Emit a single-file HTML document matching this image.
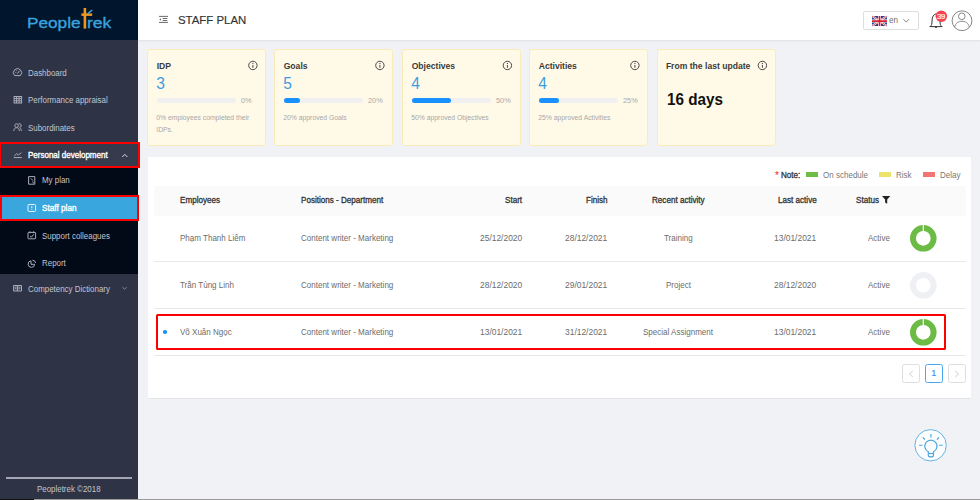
<!DOCTYPE html><html><head><meta charset="utf-8"><style>
*{margin:0;padding:0;box-sizing:border-box}
html,body{width:980px;height:500px;overflow:hidden}
body{position:relative;background:#f0f2f5;font-family:"Liberation Sans",sans-serif;color:#333}
.a{position:absolute;white-space:nowrap}
svg.a{overflow:visible}
.card{background:#fffae8;border:1px solid #fcebb8;border-radius:3px;width:119px;height:96.2px;top:49.4px}
.bar{height:5px;border-radius:3px;background:#f0f0f0;top:98px}
.barf{height:5px;border-radius:3px;background:#1890ff;top:98px}
.sep{height:1px;background:#e8e8e8;left:154px;width:811.6px}
.ic{stroke:#a9adb9;fill:none;stroke-width:1}
</style></head><body>
<div class="a" style="left:0;top:0;width:138px;height:40px;background:#01152c"></div>
<div class="a" style="left:0;top:40px;width:138px;height:460px;background:#2e3346"></div>
<div class="a" style="left:138px;top:0;width:842px;height:40px;background:#fff;box-shadow:0 1px 2px rgba(0,0,0,0.08)"></div>
<div class="a" style="left:26.77px;top:15.00px;font-size:15.5px;line-height:15.5px;color:#3aa2de;transform:scaleX(1.11);transform-origin:0 0;-webkit-text-stroke:0.35px #3aa2de;">People</div>
<div class="a" style="left:86.75px;top:15.00px;font-size:15.5px;line-height:15.5px;color:#3aa2de;transform:scaleX(1.13);transform-origin:0 0;-webkit-text-stroke:0.35px #3aa2de;">rek</div>
<svg class="a" style="left:0;top:0" width="138" height="40"><rect x="83.6" y="8" width="2.6" height="20.6" fill="#f0961e"/><rect x="81.4" y="13.4" width="10.8" height="2.5" fill="#f0961e"/><line x1="87.5" y1="13.9" x2="92.2" y2="10" stroke="#3aa2de" stroke-width="1.5"/></svg>
<svg class="a" style="left:0;top:0" width="200" height="40"><g stroke="#5a5a5a" stroke-width="0.9"><line x1="159" y1="16.4" x2="168" y2="16.4"/><line x1="162.7" y1="18.5" x2="167.3" y2="18.5"/><line x1="162.7" y1="20.5" x2="167.3" y2="20.5"/><line x1="159" y1="22.4" x2="168" y2="22.4"/></g><path d="M161 18.4 L159.3 19.5 L161 20.6Z" fill="#5a5a5a"/></svg>
<div class="a" style="left:178.01px;top:14.00px;font-size:11.6px;line-height:11.6px;color:#333;transform:scaleX(0.985);transform-origin:0 0;-webkit-text-stroke:0.15px #333;">STAFF PLAN</div>
<div class="a" style="left:862.9px;top:11.2px;width:56.2px;height:18.4px;border:1px solid #dedede;border-radius:2px"></div>
<svg class="a" style="left:871.9px;top:15.8px" width="15" height="10" viewBox="0 0 60 40"><rect width="60" height="40" fill="#2a3f8f"/><path d="M0 0L60 40M60 0L0 40" stroke="#fff" stroke-width="8"/><path d="M0 0L60 40M60 0L0 40" stroke="#d4202e" stroke-width="3"/><path d="M30 0V40M0 20H60" stroke="#fff" stroke-width="12"/><path d="M30 0V40M0 20H60" stroke="#d4202e" stroke-width="7"/></svg>
<div class="a" style="left:889.01px;top:16.00px;font-size:8.4px;line-height:8.4px;color:#707070;transform:scaleX(0.97);transform-origin:0 0;">en</div>
<svg class="a" style="left:0;top:0" width="980" height="40"><path d="M903.3 19.2 L906.2 22 L909 19.2" stroke="#777" stroke-width="0.9" fill="none"/></svg>
<svg class="a" style="left:0;top:0" width="980" height="40"><path d="M929.6 26.6 H942.4 M930.3 26.6 C931.6 25.3 932 24 932 21 C932 17 933.6 14.3 936 13.9 C938.4 14.3 940 17 940 21 C940 24 940.4 25.3 941.7 26.6" stroke="#333" stroke-width="1" fill="none"/><path d="M934.6 27.1 Q936 29 937.4 27.1" fill="#333"/>
<circle cx="941.35" cy="16.25" r="5.75" fill="#f5424f"/>
<circle cx="962" cy="20.75" r="9.9" stroke="#7a7a7a" stroke-width="0.9" fill="none"/>
<circle cx="961.8" cy="16.3" r="3.3" stroke="#7a7a7a" stroke-width="0.9" fill="none"/>
<path d="M954.6 27.2 C955.5 23 958.5 21.3 962 21.3 C965.5 21.3 968.5 23 969.4 27.2" stroke="#7a7a7a" stroke-width="0.9" fill="none"/>
</svg>
<div class="a" style="left:936.96px;top:13.00px;font-size:7.8px;line-height:7.8px;color:#fff;-webkit-text-stroke:0.15px #fff;letter-spacing:-0.25px;">39</div>
<div class="a" style="left:-1px;top:141.6px;width:141px;height:26.4px;background:#353a4d;border:2px solid #fc0000"></div>
<div class="a" style="left:0;top:168px;width:138px;height:106.3px;background:#020a17"></div>
<div class="a" style="left:0;top:195.4px;width:139px;height:25.2px;background:#3aa6de;border:2px solid #fc0000"></div>
<div class="a" style="left:28.12px;top:69.00px;font-size:8.3px;line-height:8.3px;color:#c3c6cf;transform:scaleX(0.955);transform-origin:0 0;">Dashboard</div>
<div class="a" style="left:28.12px;top:96.00px;font-size:8.3px;line-height:8.3px;color:#c3c6cf;transform:scaleX(0.955);transform-origin:0 0;">Performance appraisal</div>
<div class="a" style="left:28.12px;top:124.00px;font-size:8.3px;line-height:8.3px;color:#c3c6cf;transform:scaleX(0.955);transform-origin:0 0;">Subordinates</div>
<div class="a" style="left:28.12px;top:151.00px;font-size:8.3px;line-height:8.3px;color:#fff;-webkit-text-stroke:0.35px #fff;transform:scaleX(0.965);transform-origin:0 0;">Personal development</div>
<div class="a" style="left:41.72px;top:176.00px;font-size:8.3px;line-height:8.3px;color:#c3c6cf;transform:scaleX(0.955);transform-origin:0 0;">My plan</div>
<div class="a" style="left:41.81px;top:204.00px;font-size:8.3px;line-height:8.3px;color:#fff;-webkit-text-stroke:0.35px #fff;transform:scaleX(0.99);transform-origin:0 0;">Staff plan</div>
<div class="a" style="left:41.82px;top:232.00px;font-size:8.3px;line-height:8.3px;color:#c3c6cf;transform:scaleX(0.955);transform-origin:0 0;">Support colleagues</div>
<div class="a" style="left:41.82px;top:259.00px;font-size:8.3px;line-height:8.3px;color:#c3c6cf;transform:scaleX(0.955);transform-origin:0 0;">Report</div>
<div class="a" style="left:28.22px;top:285.00px;font-size:8.3px;line-height:8.3px;color:#c3c6cf;transform:scaleX(0.955);transform-origin:0 0;">Competency Dictionary</div>
<svg class="a" style="left:0;top:0" width="138" height="300">
<g class="ic">
<path d="M14.6 75.6 A4.1 4.1 0 1 1 20.4 75.6 Z"/><path d="M17.5 73.6 L19.4 70.9 M15.4 72.4 H16.3 M16.4 70.2 L16.9 70.8"/>
<rect x="14.1" y="96.5" width="7.5" height="6.5"/><path d="M14.1 98.6H21.6M14.1 100.8H21.6M16.6 96.5V103M19.1 96.5V103"/>
<circle cx="16.6" cy="125.6" r="1.8"/><path d="M13.8 131 C14 128.6 15.2 127.7 16.6 127.7 C18 127.7 19.2 128.6 19.4 131"/><path d="M18.6 123.9 A1.8 1.8 0 1 1 19.6 127.3 M19.6 127.7 C20.6 128.1 21.2 129 21.3 131"/>
<path d="M13.8 157.6 H21.8 M14.3 156 L16.8 153.6 L18.3 155 L21.3 152.8"/>
<path d="M34.8 176.6 H28.6 V184.2 H34.8 Z"/><path d="M30.8 178.4 L33 180.6 M32.2 181.6 L34 183.2"/>
<rect x="28" y="204.5" width="7.6" height="7" rx="1" stroke="#e8f4fb"/><path d="M31.8 206.2 V208.3 M31.8 209.3 V210" stroke="#e8f4fb"/>
<rect x="28" y="232.4" width="7.6" height="6.4" rx="0.6"/><path d="M30 231.3V233.2M33.6 231.3V233.2M30 235.9 L31.4 237.2 L33.8 234.3"/>
<path d="M31 260.8 A3.3 3.3 0 1 0 34.7 264.3 H31 Z"/><path d="M32.4 260.2 A3.2 3.2 0 0 1 35.6 263"/>
<path d="M13.6 285.5 H17.4 V291 H13.6 Z M17.4 285.5 H21.5 V291 H17.4 Z M14.6 287.2H16.4M14.6 288.8H16.4M18.4 287.2H20.4M18.4 288.8H20.4"/>
</g>
<path d="M122.2 157 L124.8 154.4 L127.4 157" stroke="#d9dbe2" stroke-width="1" fill="none"/>
<path d="M122.5 287.2 L124.6 289.2 L126.7 287.2" stroke="#8d91a0" stroke-width="0.9" fill="none"/>
</svg>
<div class="a" style="left:6px;top:477.3px;width:126px;height:1.5px;background:#a3a6b2"></div>
<div class="a" style="left:36.92px;top:485.00px;font-size:8.3px;line-height:8.3px;color:#c3c6cf;transform:scaleX(0.955);transform-origin:0 0;">Peopletrek ©2018</div>
<div class="a" style="left:0;top:499px;width:34px;height:1px;background:#111"></div>
<div class="a" style="left:34px;top:499px;width:946px;height:1px;background:#9b9b9b"></div>
<div class="a card" style="left:147px"></div>
<div class="a card" style="left:274px"></div>
<div class="a card" style="left:402px"></div>
<div class="a card" style="left:529px"></div>
<div class="a card" style="left:657px"></div>
<div class="a" style="left:156.68px;top:62.00px;font-size:8.6px;line-height:8.6px;color:#3a3a3a;font-weight:bold;">IDP</div>
<div class="a" style="left:156.36px;top:76.00px;font-size:15.6px;line-height:15.6px;color:#3d9ce0;">3</div>
<div class="a bar" style="left:156.7px;width:79.6px"></div>
<div class="a" style="left:241.06px;top:97.00px;font-size:7.8px;line-height:7.8px;color:#a8a8a8;transform:scaleX(0.94);transform-origin:0 0;">0%</div>
<div class="a" style="left:156.29px;top:115.00px;font-size:6.8px;line-height:6.8px;color:#a8a8a8;">0% employees completed their</div>
<div class="a" style="left:156.29px;top:127.00px;font-size:6.8px;line-height:6.8px;color:#a8a8a8;">IDPs.</div>
<div class="a" style="left:283.68px;top:62.00px;font-size:8.6px;line-height:8.6px;color:#3a3a3a;font-weight:bold;">Goals</div>
<div class="a" style="left:283.36px;top:76.00px;font-size:15.6px;line-height:15.6px;color:#3d9ce0;">5</div>
<div class="a bar" style="left:283.7px;width:79.6px"></div>
<div class="a barf" style="left:283.7px;width:15.9px"></div>
<div class="a" style="left:368.06px;top:97.00px;font-size:7.8px;line-height:7.8px;color:#a8a8a8;transform:scaleX(0.94);transform-origin:0 0;">20%</div>
<div class="a" style="left:283.29px;top:115.00px;font-size:6.8px;line-height:6.8px;color:#a8a8a8;">20% approved Goals</div>
<div class="a" style="left:411.68px;top:62.00px;font-size:8.6px;line-height:8.6px;color:#3a3a3a;font-weight:bold;">Objectives</div>
<div class="a" style="left:411.36px;top:76.00px;font-size:15.6px;line-height:15.6px;color:#3d9ce0;">4</div>
<div class="a bar" style="left:411.7px;width:79.6px"></div>
<div class="a barf" style="left:411.7px;width:39.8px"></div>
<div class="a" style="left:496.06px;top:97.00px;font-size:7.8px;line-height:7.8px;color:#a8a8a8;transform:scaleX(0.94);transform-origin:0 0;">50%</div>
<div class="a" style="left:411.29px;top:115.00px;font-size:6.8px;line-height:6.8px;color:#a8a8a8;">50% approved Objectives</div>
<div class="a" style="left:538.68px;top:62.00px;font-size:8.6px;line-height:8.6px;color:#3a3a3a;font-weight:bold;">Activities</div>
<div class="a" style="left:538.36px;top:76.00px;font-size:15.6px;line-height:15.6px;color:#3d9ce0;">4</div>
<div class="a bar" style="left:538.7px;width:79.6px"></div>
<div class="a barf" style="left:538.7px;width:19.9px"></div>
<div class="a" style="left:623.06px;top:97.00px;font-size:7.8px;line-height:7.8px;color:#a8a8a8;transform:scaleX(0.94);transform-origin:0 0;">25%</div>
<div class="a" style="left:538.29px;top:115.00px;font-size:6.8px;line-height:6.8px;color:#a8a8a8;">25% approved Activities</div>
<svg class="a" style="left:0;top:0" width="980" height="150"><circle cx="252.9" cy="65.45" r="4.2" stroke="#484848" stroke-width="1" fill="none"/><path d="M252.9 64.9V67.8" stroke="#484848" stroke-width="1"/><circle cx="252.9" cy="63.4" r="0.6" fill="#484848"/><circle cx="379.9" cy="65.45" r="4.2" stroke="#484848" stroke-width="1" fill="none"/><path d="M379.9 64.9V67.8" stroke="#484848" stroke-width="1"/><circle cx="379.9" cy="63.4" r="0.6" fill="#484848"/><circle cx="507.4" cy="65.45" r="4.2" stroke="#484848" stroke-width="1" fill="none"/><path d="M507.4 64.9V67.8" stroke="#484848" stroke-width="1"/><circle cx="507.4" cy="63.4" r="0.6" fill="#484848"/><circle cx="634.9" cy="65.45" r="4.2" stroke="#484848" stroke-width="1" fill="none"/><path d="M634.9 64.9V67.8" stroke="#484848" stroke-width="1"/><circle cx="634.9" cy="63.4" r="0.6" fill="#484848"/><circle cx="762.4" cy="65.45" r="4.2" stroke="#484848" stroke-width="1" fill="none"/><path d="M762.4 64.9V67.8" stroke="#484848" stroke-width="1"/><circle cx="762.4" cy="63.4" r="0.6" fill="#484848"/></svg>
<div class="a" style="left:665.88px;top:62.00px;font-size:8.6px;line-height:8.6px;color:#3a3a3a;font-weight:bold;">From the last update</div>
<div class="a" style="left:666.68px;top:91.00px;font-size:16.4px;line-height:16.4px;color:#111;font-weight:bold;transform:scaleX(0.93);transform-origin:0 0;">16 days</div>
<div class="a" style="left:147.5px;top:156.6px;width:823.5px;height:241.2px;background:#fff;box-shadow:0 0.5px 1px rgba(0,0,0,0.06)"></div>
<div class="a" style="left:154px;top:186px;width:811.6px;height:29.5px;background:#fafafa"></div>
<div class="a" style="left:774.90px;top:171.00px;font-size:10px;line-height:10px;color:#f5222d;">*</div>
<div class="a" style="left:780.51px;top:171.00px;font-size:8.3px;line-height:8.3px;color:#333;-webkit-text-stroke:0.3px #333;transform:scaleX(0.975);transform-origin:0 0;">Note:</div>
<div class="a" style="left:806px;top:172.3px;width:11.7px;height:5px;background:#6dbc45"></div>
<div class="a" style="left:823.32px;top:172.00px;font-size:8.2px;line-height:8.2px;color:#777;transform:scaleX(0.98);transform-origin:0 0;">On schedule</div>
<div class="a" style="left:879.4px;top:172.3px;width:11.5px;height:5px;background:#eee36a"></div>
<div class="a" style="left:896.22px;top:172.00px;font-size:8.2px;line-height:8.2px;color:#777;transform:scaleX(0.98);transform-origin:0 0;">Risk</div>
<div class="a" style="left:923.2px;top:172.3px;width:11.7px;height:5px;background:#f47474"></div>
<div class="a" style="left:940.22px;top:172.00px;font-size:8.2px;line-height:8.2px;color:#777;transform:scaleX(0.98);transform-origin:0 0;">Delay</div>
<div class="a" style="left:179.51px;top:196.00px;font-size:8.3px;line-height:8.3px;color:#333;-webkit-text-stroke:0.3px #333;transform:scaleX(0.975);transform-origin:0 0;">Employees</div>
<div class="a" style="left:301.31px;top:196.00px;font-size:8.3px;line-height:8.3px;color:#333;-webkit-text-stroke:0.3px #333;transform:scaleX(0.975);transform-origin:0 0;">Positions - Department</div>
<div class="a" style="left:504.80px;top:196.00px;font-size:8.3px;line-height:8.3px;color:#333;-webkit-text-stroke:0.3px #333;transform:scaleX(0.975);transform-origin:0 0;">Start</div>
<div class="a" style="left:586.00px;top:196.00px;font-size:8.3px;line-height:8.3px;color:#333;-webkit-text-stroke:0.3px #333;transform:scaleX(0.975);transform-origin:0 0;">Finish</div>
<div class="a" style="left:652.39px;top:196.00px;font-size:8.3px;line-height:8.3px;color:#333;-webkit-text-stroke:0.3px #333;transform:scaleX(0.975);transform-origin:0 0;">Recent activity</div>
<div class="a" style="left:777.51px;top:196.00px;font-size:8.3px;line-height:8.3px;color:#333;-webkit-text-stroke:0.3px #333;transform:scaleX(0.975);transform-origin:0 0;">Last active</div>
<div class="a" style="left:856.31px;top:196.00px;font-size:8.3px;line-height:8.3px;color:#333;-webkit-text-stroke:0.3px #333;transform:scaleX(0.975);transform-origin:0 0;">Status</div>
<svg class="a" style="left:0;top:0" width="980" height="220"><path d="M882 196 H890.3 L887.2 199.6 V203.8 L885.1 202.6 V199.6 Z" fill="#222"/></svg>
<div class="a sep" style="top:261px"></div>
<div class="a sep" style="top:307.7px"></div>
<div class="a sep" style="top:354.6px"></div>
<div class="a" style="left:179.62px;top:235.00px;font-size:8.2px;line-height:8.2px;color:#6c6c6c;transform:scaleX(0.98);transform-origin:0 0;">Phạm Thanh Liêm</div>
<div class="a" style="left:301.32px;top:235.00px;font-size:8.2px;line-height:8.2px;color:#6c6c6c;transform:scaleX(0.98);transform-origin:0 0;">Content writer - Marketing</div>
<div class="a" style="left:479.63px;top:235.00px;font-size:8.2px;line-height:8.2px;color:#6c6c6c;transform:scaleX(1.03);transform-origin:0 0;">25/12/2020</div>
<div class="a" style="left:564.93px;top:235.00px;font-size:8.2px;line-height:8.2px;color:#6c6c6c;transform:scaleX(1.03);transform-origin:0 0;">28/12/2021</div>
<div class="a" style="left:664.13px;top:235.00px;font-size:8.2px;line-height:8.2px;color:#6c6c6c;transform:scaleX(0.98);transform-origin:0 0;">Training</div>
<div class="a" style="left:774.09px;top:235.00px;font-size:8.2px;line-height:8.2px;color:#6c6c6c;transform:scaleX(1.03);transform-origin:0 0;">13/01/2021</div>
<div class="a" style="left:867.92px;top:235.00px;font-size:8.2px;line-height:8.2px;color:#6c6c6c;transform:scaleX(0.98);transform-origin:0 0;">Active</div>
<svg class="a" style="left:909.9px;top:225.2px" width="26.6" height="26.6" viewBox="0 0 40 40"><circle cx="20" cy="20" r="15.55" fill="none" stroke="#6cbb45" stroke-width="8.9"/><rect x="19.1" y="0" width="1.8" height="10" fill="#fff"/></svg>
<div class="a" style="left:179.62px;top:282.00px;font-size:8.2px;line-height:8.2px;color:#6c6c6c;transform:scaleX(0.98);transform-origin:0 0;">Trần Tùng Linh</div>
<div class="a" style="left:301.32px;top:282.00px;font-size:8.2px;line-height:8.2px;color:#6c6c6c;transform:scaleX(0.98);transform-origin:0 0;">Content writer - Marketing</div>
<div class="a" style="left:479.63px;top:282.00px;font-size:8.2px;line-height:8.2px;color:#6c6c6c;transform:scaleX(1.03);transform-origin:0 0;">28/12/2020</div>
<div class="a" style="left:564.93px;top:282.00px;font-size:8.2px;line-height:8.2px;color:#6c6c6c;transform:scaleX(1.03);transform-origin:0 0;">29/01/2021</div>
<div class="a" style="left:665.99px;top:282.00px;font-size:8.2px;line-height:8.2px;color:#6c6c6c;transform:scaleX(0.98);transform-origin:0 0;">Project</div>
<div class="a" style="left:774.09px;top:282.00px;font-size:8.2px;line-height:8.2px;color:#6c6c6c;transform:scaleX(1.03);transform-origin:0 0;">28/12/2020</div>
<div class="a" style="left:867.92px;top:282.00px;font-size:8.2px;line-height:8.2px;color:#6c6c6c;transform:scaleX(0.98);transform-origin:0 0;">Active</div>
<svg class="a" style="left:909.9px;top:271.7px" width="26.6" height="26.6" viewBox="0 0 40 40"><circle cx="20" cy="20" r="15.55" fill="none" stroke="#eef0f3" stroke-width="8.9"/></svg>
<div class="a" style="left:179.62px;top:329.00px;font-size:8.2px;line-height:8.2px;color:#6c6c6c;transform:scaleX(0.98);transform-origin:0 0;">Võ Xuân Ngọc</div>
<div class="a" style="left:301.32px;top:329.00px;font-size:8.2px;line-height:8.2px;color:#6c6c6c;transform:scaleX(0.98);transform-origin:0 0;">Content writer - Marketing</div>
<div class="a" style="left:479.63px;top:329.00px;font-size:8.2px;line-height:8.2px;color:#6c6c6c;transform:scaleX(1.03);transform-origin:0 0;">13/01/2021</div>
<div class="a" style="left:564.93px;top:329.00px;font-size:8.2px;line-height:8.2px;color:#6c6c6c;transform:scaleX(1.03);transform-origin:0 0;">31/12/2021</div>
<div class="a" style="left:643.43px;top:329.00px;font-size:8.2px;line-height:8.2px;color:#6c6c6c;transform:scaleX(0.98);transform-origin:0 0;">Special Assignment</div>
<div class="a" style="left:774.09px;top:329.00px;font-size:8.2px;line-height:8.2px;color:#6c6c6c;transform:scaleX(1.03);transform-origin:0 0;">13/01/2021</div>
<div class="a" style="left:867.92px;top:329.00px;font-size:8.2px;line-height:8.2px;color:#6c6c6c;transform:scaleX(0.98);transform-origin:0 0;">Active</div>
<svg class="a" style="left:909.9px;top:318.7px" width="26.6" height="26.6" viewBox="0 0 40 40"><circle cx="20" cy="20" r="15.55" fill="none" stroke="#6cbb45" stroke-width="8.9"/><rect x="19.1" y="0" width="1.8" height="10" fill="#fff"/></svg>
<div class="a" style="left:156.2px;top:314.2px;width:789.8px;height:36px;border:2px solid #fc0000;border-radius:1.5px"></div>
<div class="a" style="left:163.3px;top:330.3px;width:3.6px;height:3.6px;border-radius:50%;background:#1890ff"></div>
<div class="a" style="left:902px;top:364.3px;width:18px;height:18.3px;border:1px solid #dedede;border-radius:2.5px"></div>
<div class="a" style="left:924.6px;top:364.3px;width:18.3px;height:18.3px;border:1px solid #49a6f3;border-radius:2.5px"></div>
<div class="a" style="left:931.56px;top:369.00px;font-size:8.4px;line-height:8.4px;color:#3a8df5;-webkit-text-stroke:0.2px #3a8df5;">1</div>
<div class="a" style="left:947.6px;top:364.3px;width:18px;height:18.3px;border:1px solid #dedede;border-radius:2.5px"></div>
<svg class="a" style="left:0;top:0" width="980" height="400"><path d="M912.8 371 L909.5 374 L912.8 377" stroke="#c8c8c8" stroke-width="0.9" fill="none"/><path d="M955.2 371 L958.5 374 L955.2 377" stroke="#c8c8c8" stroke-width="0.9" fill="none"/></svg>
<svg class="a" style="left:0;top:0" width="980" height="500">
<circle cx="930.6" cy="445.3" r="15.7" fill="#fcfdff" stroke="#63b3e3" stroke-width="1"/>
<g stroke="#4aa6dc" stroke-width="1.15" fill="none">
<path d="M928.3 451.7 A6.1 6.1 0 1 1 933.5 451.7 V455.2 Q933.5 456.9 930.9 456.9 Q928.3 456.9 928.3 455.2 Z"/>
<path d="M928.3 453.5 H933.5"/>
<path d="M930.9 434 V437.4 M922.7 437.3 L924.9 439.5 M939.1 437.3 L936.9 439.5 M919 445.2 H922.5 M939.2 445.2 H942.7"/>
</g></svg>
</body></html>
